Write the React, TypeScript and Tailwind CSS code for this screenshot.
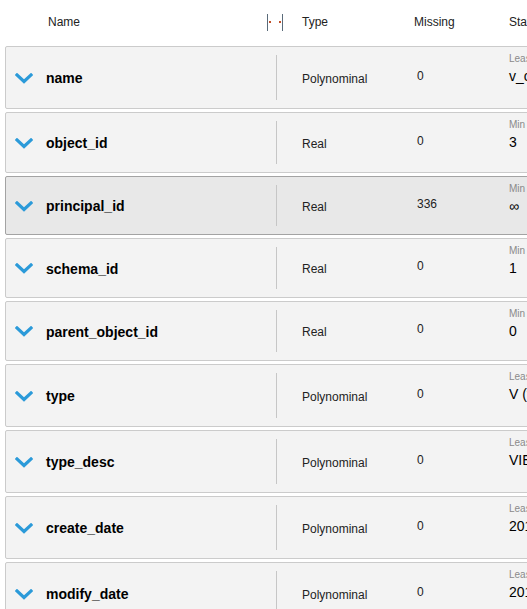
const rows: { name: string; type: string; missing: string; label: string; value: string; h: string; selected?: boolean }[] = [
  { name: "name", type: "Polynominal", missing: "0", label: "Least", value: "v_columns", h: "h-[63px]" },
  { name: "object_id", type: "Real", missing: "0", label: "Min", value: "3", h: "h-[61px]" },
  { name: "principal_id", type: "Real", missing: "336", label: "Min", value: "∞", h: "h-[59px]", selected: true },
  { name: "schema_id", type: "Real", missing: "0", label: "Min", value: "1", h: "h-[60px]" },
  { name: "parent_object_id", type: "Real", missing: "0", label: "Min", value: "0", h: "h-[60px]" },
  { name: "type", type: "Polynominal", missing: "0", label: "Least", value: "V (view)", h: "h-[63px]" },
  { name: "type_desc", type: "Polynominal", missing: "0", label: "Least", value: "VIEW", h: "h-[63px]" },
  { name: "create_date", type: "Polynominal", missing: "0", label: "Least", value: "2012-02-10", h: "h-[63px]" },
  { name: "modify_date", type: "Polynominal", missing: "0", label: "Least", value: "2012-02-10", h: "h-[63px]" },
];

function Chevron() {
  return (
    <svg width="18" height="11" viewBox="0 0 18 11" fill="none">
      <path d="M2 2 L9 8.5 L16 2" stroke="#2b9ad9" strokeWidth="3.2" strokeLinecap="square" />
    </svg>
  );
}

function ResizeIcon() {
  return (
    <svg width="18" height="17" viewBox="0 0 18 17">
      <rect x="1" y="0" width="1" height="17" fill="#5a6b7a" />
      <rect x="16" y="0" width="1" height="17" fill="#5a6b7a" />
      <rect x="3" y="7" width="2" height="2" fill="#c0502a" />
      <rect x="13" y="7" width="2" height="2" fill="#c0502a" />
    </svg>
  );
}

export default function App() {
  return (
    <div className="w-[527px] h-[609px] overflow-hidden bg-white font-['Liberation_Sans',Arial,sans-serif] text-[#222]">
      {/* Column header */}
      <div className="flex items-center h-[43px] w-[700px] text-[12px]">
        <div className="w-[48px]" />
        <div className="w-[218px]">Name</div>
        <div className="w-[36px] flex pt-[1px]">
          <ResizeIcon />
        </div>
        <div className="w-[112px]">Type</div>
        <div className="w-[95px]">Missing</div>
        <div>Statistics</div>
      </div>

      <div className="flex flex-col gap-[3px] pt-[3px]">
        {rows.map((r) => (
          <div
            key={r.name}
            className={`ml-[5px] w-[700px] ${r.h} shrink-0 flex items-center rounded-[2px] border ${
              r.selected ? "bg-[#e8e8e8] border-[#a3a3a3]" : "bg-[#f3f3f3] border-[#cbcbcb]"
            }`}
          >
            <div className="w-[40px] pl-[9px] flex items-center pt-[1px]">
              <Chevron />
            </div>
            <div className="w-[230px] text-[14px] font-bold text-black pt-[2px]">{r.name}</div>
            <div className="self-stretch my-[8px] w-px bg-[#c6c6c6]" />
            <div className="w-[140px] pl-[25px] text-[12px] pt-[2px]">{r.type}</div>
            <div className="w-[92px] text-[12px] pb-[4px]">{r.missing}</div>
            <div className="flex flex-col self-start pt-[6px]">
              <div className="text-[10px] text-[#8a8a8a] leading-[12px]">{r.label}</div>
              <div className="text-[14px] text-black leading-[18px] mt-[2px]">{r.value}</div>
            </div>
          </div>
        ))}
      </div>
    </div>
  );
}
